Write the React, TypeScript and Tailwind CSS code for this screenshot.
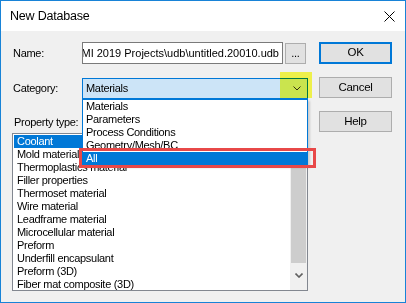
const categories = ['Materials', 'Parameters', 'Process Conditions', 'Geometry/Mesh/BC', 'All'];

const propertyTypes = [
  'Coolant',
  'Mold material',
  'Thermoplastics material',
  'Filler properties',
  'Thermoset material',
  'Wire material',
  'Leadframe material',
  'Microcellular material',
  'Preform',
  'Underfill encapsulant',
  'Preform (3D)',
  'Fiber mat composite (3D)',
  'Structural insert',
];

function Chevron({ className }: { className?: string }) {
  return (
    <svg width="8" height="5" viewBox="0 0 8 5" className={className}>
      <path d="M0.5 0.5 L4 4 L7.5 0.5" fill="none" stroke="currentColor" strokeWidth="1" />
    </svg>
  );
}

function DialogButton({ label, primary }: { label: string; primary?: boolean }) {
  return (
    <button
      className={
        'flex w-[73px] items-center justify-center bg-[#e1e1e1] text-[11.5px] text-black ' +
        (primary ? 'h-[22px] border-2 border-[#0078d7]' : 'h-[21px] border border-[#adadad]')
      }
    >
      {label}
    </button>
  );
}

export default function App() {
  return (
    <div
      className="flex h-[303px] w-[406px] flex-col border border-[#1883d7] text-[11px] tracking-[-0.3px] text-black"
      style={{ fontFamily: '"Liberation Sans", Arial, sans-serif' }}
    >
      {/* Title bar */}
      <div className="flex h-[30px] items-center justify-between bg-white pl-[9px] pr-[10px]">
        <span className="text-[12.5px] tracking-[-0.2px] text-black">New Database</span>
        <svg width="11" height="11" viewBox="0 0 11 11">
          <path d="M0.5 0.5 L10.5 10.5 M10.5 0.5 L0.5 10.5" stroke="#000" strokeWidth="1" />
        </svg>
      </div>

      {/* Body */}
      <div className="relative flex flex-1 bg-[#f0f0f0] pl-[11px] pt-[11px]">
        <div className="flex w-[296px] flex-col">
          <div className="flex h-[22px] items-center">
            <span className="w-[70px] pl-[1px]">Name:</span>
            <div className="flex h-[22px] w-[201px] items-center justify-end overflow-hidden whitespace-nowrap border border-[#7a7a7a] bg-white pr-[3px] tracking-normal">
              My AMI 2019 Projects\udb\untitled.20010.udb
            </div>
            <button className="ml-[2px] flex h-[21px] w-[21px] items-end justify-center border border-[#adadad] bg-[#e1e1e1] pb-[4px] leading-none">
              ...
            </button>
          </div>

          <div className="mt-[14px] flex h-[21px] items-center">
            <span className="w-[70px] pl-[1px]">Category:</span>
            <div className="flex h-[21px] w-[226px] items-center justify-between border border-[#0078d7] bg-[#cce4f7] pl-[3px] pr-[6px]">
              <span>Materials</span>
              <Chevron className="text-[#333]" />
            </div>
          </div>

          <span className="mt-[17px] h-[13px] pl-[2px] leading-[13px]">Property type:</span>

          <div className="mt-[4px] flex h-[158px] w-[296px] border border-[#828790] bg-white">
            <div className="flex flex-1 flex-col overflow-hidden px-[1px] pt-[1px]">
              {propertyTypes.map((t, i) => (
                <div
                  key={t}
                  className={
                    'h-[13px] shrink-0 whitespace-nowrap pl-[3px] leading-[13px] ' +
                    (i === 0 ? 'bg-[#0078d7] text-white' : '')
                  }
                >
                  {t}
                </div>
              ))}
            </div>
            <div className="flex w-[17px] flex-col bg-[#f0f0f0]">
              <div className="mx-[1px] flex-1 bg-[#cdcdcd]" />
              <div className="flex h-[27px] items-center justify-center pb-[2px]">
                <svg width="8" height="5" viewBox="0 0 8 5">
                  <path d="M0.5 0.5 L4 4 L7.5 0.5" fill="none" stroke="#606060" strokeWidth="1.6" />
                </svg>
              </div>
            </div>
          </div>
        </div>

        <div className="ml-[11px] flex flex-col">
          <DialogButton label="OK" primary />
          <div className="mt-[13px]">
            <DialogButton label="Cancel" />
          </div>
          <div className="mt-[13px]">
            <DialogButton label="Help" />
          </div>
        </div>

        {/* Open dropdown list */}
        <div className="absolute left-[81px] top-[68px] flex w-[226px] flex-col border border-[#0078d7] bg-white shadow-[2px_2px_2px_rgba(0,0,0,0.15)]">
          {categories.map((c) => (
            <div
              key={c}
              className={
                'h-[13px] whitespace-nowrap pl-[3px] leading-[13px] ' +
                (c === 'All' ? 'bg-[#0078d7] text-white' : '')
              }
            >
              {c}
            </div>
          ))}
        </div>

        {/* Highlight annotations */}
        <div className="absolute left-[279px] top-[41px] h-[26px] w-[32px] bg-[#fdff50] mix-blend-multiply" />
        <div className="absolute left-[78px] top-[117px] h-[20px] w-[237px] border-[3px] border-[#e84848]" />
      </div>
    </div>
  );
}
